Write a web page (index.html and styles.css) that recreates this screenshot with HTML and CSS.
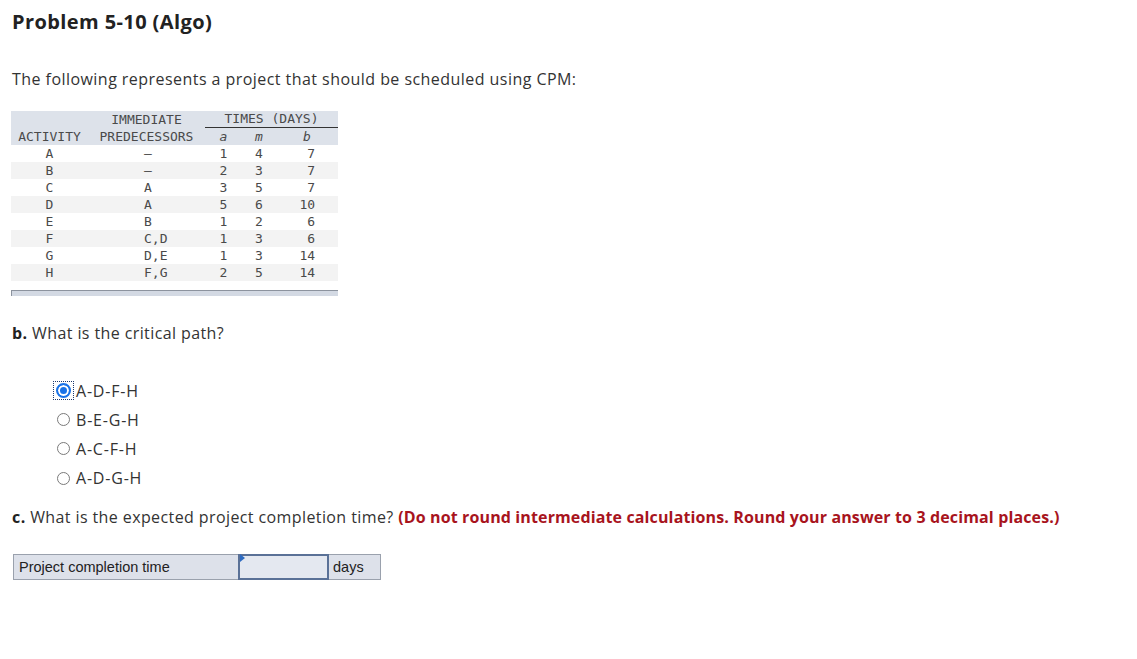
FILE: index.html
```html
<!DOCTYPE html>
<html>
<head>
<meta charset="utf-8">
<link rel="stylesheet" href="styles.css">
</head>
<body>
<div class="page">
  <h1 class="title">Problem 5-10 (Algo)</h1>
  <p class="intro">The following represents a project that should be scheduled using CPM:</p>

  <div class="table-wrap">
    <table class="cpm">
      <colgroup>
        <col class="c-act"><col class="c-pre"><col class="c-a"><col class="c-m"><col class="c-b">
      </colgroup>
      <thead>
        <tr class="h1">
          <th></th>
          <th>IMMEDIATE</th>
          <th colspan="3" class="times"><span>TIMES (DAYS)</span></th>
        </tr>
        <tr class="h2">
          <th>ACTIVITY</th>
          <th>PREDECESSORS</th>
          <th class="it">a</th>
          <th class="it">m</th>
          <th class="it">b</th>
        </tr>
      </thead>
      <tbody>
        <tr><td>A</td><td class="pre">–</td><td>1</td><td>4</td><td class="bv">7</td></tr>
        <tr><td>B</td><td class="pre">–</td><td>2</td><td>3</td><td class="bv">7</td></tr>
        <tr><td>C</td><td class="pre">A</td><td>3</td><td>5</td><td class="bv">7</td></tr>
        <tr><td>D</td><td class="pre">A</td><td>5</td><td>6</td><td class="bv">10</td></tr>
        <tr><td>E</td><td class="pre">B</td><td>1</td><td>2</td><td class="bv">6</td></tr>
        <tr><td>F</td><td class="pre">C,D</td><td>1</td><td>3</td><td class="bv">6</td></tr>
        <tr><td>G</td><td class="pre">D,E</td><td>1</td><td>3</td><td class="bv">14</td></tr>
        <tr><td>H</td><td class="pre">F,G</td><td>2</td><td>5</td><td class="bv">14</td></tr>
      </tbody>
    </table>
    <div class="table-foot"></div>
  </div>

  <p class="question"><b>b.</b> What is the critical path?</p>

  <div class="options">
    <label class="option"><span class="focus"><span class="radio checked"></span></span><span class="opt-text">A-D-F-H</span></label>
    <label class="option"><span class="focus plain"><span class="radio"></span></span><span class="opt-text">B-E-G-H</span></label>
    <label class="option"><span class="focus plain"><span class="radio"></span></span><span class="opt-text">A-C-F-H</span></label>
    <label class="option"><span class="focus plain"><span class="radio"></span></span><span class="opt-text">A-D-G-H</span></label>
  </div>

  <p class="question q-c"><b>c.</b> What is the expected project completion time? <span class="note">(Do not round intermediate calculations. Round your answer to 3 decimal places.)</span></p>

  <div class="answer">
    <div class="ans-label">Project completion time</div>
    <div class="ans-input"><span class="flag"></span></div>
    <div class="ans-unit">days</div>
  </div>
</div>
</body>
</html>
```

FILE: styles.css
```css
html, body {
  margin: 0;
  padding: 0;
  background: #ffffff;
}

.page {
  padding: 0 0 0 12px;
  font-family: "Open Sans", "Lato", sans-serif;
  color: #333333;
}

.title {
  margin: 0;
  padding-top: 9px;
  font-size: 20px;
  line-height: 26px;
  font-weight: 700;
  color: #222222;
  letter-spacing: 0.4px;
}

.intro {
  margin: 34px 0 0 0;
  font-size: 16px;
  line-height: 20px;
  letter-spacing: 0.45px;
}

.table-wrap {
  margin: 22px 0 0 -1px;
  width: 327px;
}

.cpm {
  border-collapse: collapse;
  width: 327px;
  table-layout: fixed;
  font-family: "DejaVu Sans Mono", "Liberation Mono", monospace;
  font-size: 13px;
  color: #4a4a4a;
}

.c-act { width: 77px; }
.c-pre { width: 117px; }
.c-a { width: 37px; }
.c-m { width: 34px; }
.c-b { width: 62px; }

.cpm th {
  font-weight: 400;
  background: #dde2ea;
  padding: 0;
  text-align: center;
  white-space: nowrap;
}

.cpm .h1 th {
  height: 17px;
  line-height: 17px;
}

.cpm .h2 th {
  height: 17px;
  line-height: 17px;
}

.cpm .times span {
  display: block;
  border-bottom: 1px solid #333333;
  line-height: 16px;
}

.cpm .it {
  font-style: italic;
}

.cpm td {
  padding: 0;
  height: 17px;
  line-height: 17px;
  text-align: center;
}

.cpm tbody tr:nth-child(even) td {
  background: #f3f3f3;
}

.cpm td.pre {
  text-align: left;
  padding-left: 56px;
}

.cpm td.bv {
  text-align: right;
  padding-right: 23px;
}

.table-foot {
  margin-top: 9px;
  height: 5px;
  background: #d3d9e3;
  border-top: 1px solid #8c939e;
  border-left: 1px solid #8c939e;
}

.question {
  margin: 27px 0 0 0;
  font-size: 16px;
  line-height: 20px;
  letter-spacing: 0.4px;
}

.question b {
  font-weight: 700;
  color: #222222;
}

.options {
  margin-top: 33px;
  display: flex;
  flex-direction: column;
  padding-left: 41px;
}

.option {
  display: flex;
  align-items: center;
  height: 29.2px;
  font-size: 16px;
  letter-spacing: 0.8px;
}

.focus {
  display: flex;
  align-items: center;
  justify-content: center;
  width: 19px;
  height: 17px;
  border: 1px dotted #1d3a6e;
  margin-right: 1px;
}

.focus.plain {
  border-color: transparent;
}

.radio {
  width: 13px;
  height: 13px;
  border-radius: 50%;
  border: 1px solid #7a7a7a;
  box-sizing: border-box;
  background: #ffffff;
}

.radio.checked {
  width: 15px;
  height: 15px;
  border: 2px solid #1a73e8;
  background: #1a73e8;
  box-shadow: inset 0 0 0 2px #ffffff;
}

.opt-text {
  margin-left: 1px;
}

.q-c {
  margin-top: 14px;
}

.note {
  color: #a8141d;
  font-weight: 700;
  letter-spacing: 0.13px;
}

.answer {
  margin: 27px 0 0 1px;
  display: flex;
  height: 26px;
  font-family: "Liberation Sans", Arial, sans-serif;
  font-size: 14.5px;
  color: #222222;
}

.ans-label {
  width: 225px;
  box-sizing: border-box;
  background: #dde1ea;
  border: 1px solid #9aa1ad;
  border-right: none;
  padding-left: 5px;
  line-height: 24px;
}

.ans-input {
  position: relative;
  width: 91px;
  box-sizing: border-box;
  background: #e4e8f0;
  border: 2px solid #5a7197;
}

.flag {
  position: absolute;
  left: 0;
  top: 0;
  width: 0;
  height: 0;
  border-top: 4px solid transparent;
  border-bottom: 4px solid transparent;
  border-left: 5px solid #2d6bc2;
  transform: translateY(-2px);
}

.ans-unit {
  width: 52px;
  box-sizing: border-box;
  background: #dde1ea;
  border: 1px solid #9aa1ad;
  border-left: none;
  padding-left: 4px;
  line-height: 24px;
}
```
